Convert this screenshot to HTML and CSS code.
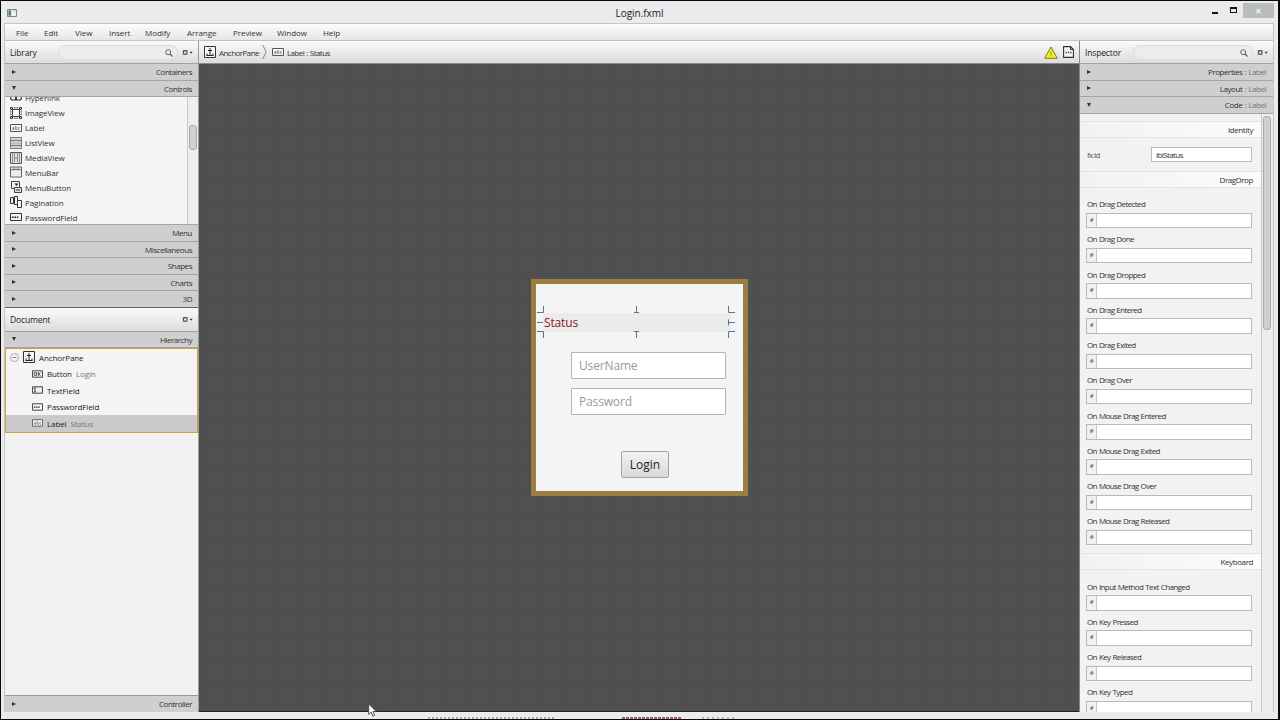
FILE: index.html
```html
<!DOCTYPE html>
<html lang="en">
<head>
  <meta charset="UTF-8">
  <meta name="viewport" content="width=device-width, initial-scale=1.0">
  <title>Login.fxml</title>
  <link rel="stylesheet" href="styles.css">
</head>
<body>
  <!-- Shared icons -->
  <svg class="defs" width="0" height="0">
    <symbol id="i-anchor" viewBox="0 0 12 12"><path d="M.5.5h11v11H.5z" fill="#f6f6f6" stroke="#333"/><path d="M6 2v7.500M4 4.500h4M2.500 9.500h7M3 7.500v2M9 7.500v2" fill="none" stroke="#222"/></symbol>
    <symbol id="i-label" viewBox="0 0 12 8"><path d="M.5.5h11v7H.5z" fill="#f6f6f6" stroke="#555"/><path d="M2.500 3.500h1.500v2H2.500v-1H4M5.500 2v3.500H7v-2H5.500M9.800 3.500H8.500v2h1.300" fill="none" stroke="#777" stroke-width=".7"/></symbol>
    <symbol id="i-button" viewBox="0 0 12 8"><path d="M.5.5h11v7H.5z" fill="#f6f6f6" stroke="#333"/><path d="M2.500 2.500h2.500v3H2.500zM7 2v4M9.500 2L7.300 4l2.200 2" fill="none" stroke="#333" stroke-width=".9"/></symbol>
    <symbol id="i-text" viewBox="0 0 12 8"><path d="M.5.5h11v7H.5z" fill="#eee" stroke="#333"/><path d="M2 2h2.400M2 6h2.400M3.200 2v4" stroke="#333" fill="none" stroke-width=".9"/></symbol>
    <symbol id="i-pass" viewBox="0 0 12 8"><path d="M.5.5h11v7H.5z" fill="#f6f6f6" stroke="#333"/><path d="M2 4.200h1.600M4.400 4.200H6M6.800 4.200h1.600" stroke="#222" stroke-width="1.500"/></symbol>
    <symbol id="i-image" viewBox="0 0 12 12"><path d="M2.500 2.500h7v7h-7z" fill="none" stroke="#444"/><path d="M.5.5h2v2h-2zM9.500.5h2v2h-2zM.5 9.500h2v2h-2zM9.500 9.500h2v2h-2zM4 .8h1.500M6.500.8H8M4 11.200h1.500M6.500 11.200H8M.8 4v1.500M.8 6.500V8M11.200 4v1.500M11.200 6.500V8" fill="#ddd" stroke="#333"/></symbol>
    <symbol id="i-list" viewBox="0 0 12 12"><path d="M.5.5h11v11H.5z" fill="#d4d4d4" stroke="#777"/><path d="M.5 3.500h11M.5 8.500h11" stroke="#777"/><path d="M.5 6h11" stroke="#aaa"/></symbol>
    <symbol id="i-media" viewBox="0 0 12 12"><path d="M.5.5h11v11H.5z" fill="#e2e2e2" stroke="#555"/><path d="M2.500.5v11M9.500.5v11M4.500 1v9M7.500 1v9M4.500 6h3" stroke="#777" fill="none" stroke-width=".8"/></symbol>
    <symbol id="i-menubar" viewBox="0 0 12 11"><path d="M.5.5h11v10H.5z" fill="#eee" stroke="#666"/><path d="M.5 3.200h11M4.200 1v2M8 1v2" stroke="#666"/></symbol>
    <symbol id="i-menubtn" viewBox="0 0 12 12"><path d="M1.500.5h8v7h-8z" fill="#eee" stroke="#444"/><path d="M4.500 6.500h7v5h-7z" fill="#ddd" stroke="#444"/><path d="M4.500 2.500h4l-2 2.500z" fill="#222"/><path d="M6 9h4" stroke="#444"/></symbol>
    <symbol id="i-pages" viewBox="0 0 12 12"><path d="M.5 1.500h3v6h-3z" fill="#eee" stroke="#333"/><path d="M4.500.5h3v8h-3zM7.500 4.500h4v7h-4z" fill="#f4f4f4" stroke="#333"/></symbol>
    <symbol id="i-link" viewBox="0 0 12 8"><rect x=".6" y="2" width="6" height="4" rx="2" fill="none" stroke="#333" stroke-width="1.100"/><rect x="5.400" y="2" width="6" height="4" rx="2" fill="none" stroke="#333" stroke-width="1.100"/></symbol>
    <symbol id="i-search" viewBox="0 0 8 8"><circle cx="3.200" cy="3.200" r="2.500" fill="none" stroke="#555" stroke-width=".9"/><path d="M5 5l2.500 2.500" stroke="#555" stroke-width="1.100"/></symbol>
    <symbol id="i-gear" viewBox="0 0 11 7"><circle cx="3.200" cy="3.500" r="1.900" fill="none" stroke="#444" stroke-width="1.100"/><path d="M1 1.300l.7.7M5.400 1.300l-.7.7M1 5.700l.7-.7M5.400 5.700l-.7-.7" stroke="#444"/><path d="M7.600 2.700h3l-1.500 2z" fill="#333"/></symbol>
  </svg>

  <div class="window">
    <header class="titlebar">
      <svg class="app-icon" viewBox="0 0 11 9"><path d="M.5.5h10v8H.5z" fill="#eef3f1" stroke="#5f7771"/><path d="M1.500 1.500h3v6h-3z" fill="#4d7e72"/><path d="M7 2h2.500" stroke="#9ab"/></svg>
      <h1 class="title">Login.fxml</h1>
      <div class="win-buttons">
        <span class="win-min"></span>
        <span class="win-max"></span>
        <span class="win-close">✕</span>
      </div>
    </header>

    <div class="app">
      <nav class="menubar">
        <span class="m-file">File</span><span class="m-edit">Edit</span><span class="m-view">View</span><span class="m-insert">Insert</span><span class="m-modify">Modify</span><span class="m-arrange">Arrange</span><span class="m-preview">Preview</span><span class="m-window">Window</span><span>Help</span>
      </nav>

      <div class="columns">
        <!-- Library + Document -->
        <aside class="left">
          <div class="panel-head"><span>Library</span><div class="search"><svg><use href="#i-search"/></svg></div><svg class="gear"><use href="#i-gear"/></svg></div>
          <div class="section"><i class="arrow"></i><span>Containers</span></div>
          <div class="section"><i class="arrow open"></i><span>Controls</span></div>
          <div class="library">
            <ul class="lib-list">
              <li><svg class="low"><use href="#i-link"/></svg>Hyperlink</li>
              <li><svg><use href="#i-image"/></svg>ImageView</li>
              <li><svg class="low"><use href="#i-label"/></svg>Label</li>
              <li><svg><use href="#i-list"/></svg>ListView</li>
              <li><svg><use href="#i-media"/></svg>MediaView</li>
              <li><svg><use href="#i-menubar"/></svg>MenuBar</li>
              <li><svg><use href="#i-menubtn"/></svg>MenuButton</li>
              <li><svg><use href="#i-pages"/></svg>Pagination</li>
              <li><svg class="low"><use href="#i-pass"/></svg>PasswordField</li>
            </ul>
            <div class="scroll"><div class="thumb"></div></div>
          </div>
          <div class="section"><i class="arrow"></i><span>Menu</span></div>
          <div class="section"><i class="arrow"></i><span>Miscellaneous</span></div>
          <div class="section"><i class="arrow"></i><span>Shapes</span></div>
          <div class="section"><i class="arrow"></i><span>Charts</span></div>
          <div class="section above-doc"><i class="arrow"></i><span>3D</span></div>
          <div class="panel-head doc-head"><span>Document</span><svg class="gear"><use href="#i-gear"/></svg></div>
          <div class="section"><i class="arrow open"></i><span>Hierarchy</span></div>
          <ul class="tree">
            <li class="root"><svg class="toggle" viewBox="0 0 9 9"><circle cx="4.500" cy="4.500" r="4" fill="none" stroke="#b4a9a0"/><path d="M2.500 4.500h4" stroke="#888"/></svg><svg class="big"><use href="#i-anchor"/></svg>AnchorPane</li>
            <li><svg><use href="#i-button"/></svg>Button <em>Login</em></li>
            <li><svg><use href="#i-text"/></svg>TextField</li>
            <li><svg><use href="#i-pass"/></svg>PasswordField</li>
            <li class="selected"><svg><use href="#i-label"/></svg>Label <em>Status</em></li>
          </ul>
          <div class="blank"></div>
          <div class="section last"><i class="arrow"></i><span>Controller</span></div>
        </aside>

        <!-- Design canvas -->
        <main class="center">
          <div class="crumbs">
            <svg class="big"><use href="#i-anchor"/></svg><span class="crumb">AnchorPane</span>
            <svg class="chevron" viewBox="0 0 5 16"><path d="M.7 1l3.500 7-3.500 7" fill="none" stroke="#888"/></svg>
            <svg class="small"><use href="#i-label"/></svg><span class="crumb">Label : Status</span>
            <svg class="warn" viewBox="0 0 14 13"><path d="M7 1l6.300 11.300H.7z" fill="#f3f31c" stroke="#77782a"/><path d="M7 6v2.500M7 9.300v1" stroke="#77781a"/></svg>
            <svg class="doc" viewBox="0 0 11 12"><path d="M.6.6h6.900l2.900 2.900v7.900H.6z" fill="#f6f6f6" stroke="#333" stroke-width="1.100"/><path d="M7.500.6v2.900h2.900" fill="none" stroke="#333"/><path d="M2.500 6.500h1.500M4.800 6.500h1.500M7.100 6.500h1.500" stroke="#555" stroke-width="1.500"/></svg>
          </div>
          <div class="canvas">
            <div class="pane">
              <div class="status">Status</div>
              <svg class="handles" viewBox="0 0 200 34"><path d="M1 7.500h6.500V1M1 26.500h6.500V33M199 7.500h-6.500V1M199 26.500h-6.500V33M98 7.500h5M100.500 7.500V1M98 26.500h5M100.500 26.500V33M1 17.500h6M193 17.500h6M192.500 14.500v6" fill="none" stroke="#5a7298"/></svg>
              <div class="input user">UserName</div>
              <div class="input password">Password</div>
              <div class="login">Login</div>
            </div>
          </div>
        </main>

        <!-- Inspector -->
        <aside class="right">
          <div class="panel-head"><span>Inspector</span><div class="search"><svg><use href="#i-search"/></svg></div><svg class="gear"><use href="#i-gear"/></svg></div>
          <div class="section"><i class="arrow"></i><span>Properties <em>: Label</em></span></div>
          <div class="section"><i class="arrow"></i><span>Layout <em>: Label</em></span></div>
          <div class="section"><i class="arrow open"></i><span>Code <em>: Label</em></span></div>
          <div class="inspector">
            <div class="fields">
              <div class="band">Identity</div>
              <div class="fxid"><span>fx:id</span><div class="value">lblStatus</div></div>
              <div class="band">DragDrop</div>
              <div class="events">
                <div class="event"><label>On Drag Detected</label><div class="box"><b>#</b></div></div>
                <div class="event"><label>On Drag Done</label><div class="box"><b>#</b></div></div>
                <div class="event"><label>On Drag Dropped</label><div class="box"><b>#</b></div></div>
                <div class="event"><label>On Drag Entered</label><div class="box"><b>#</b></div></div>
                <div class="event"><label>On Drag Exited</label><div class="box"><b>#</b></div></div>
                <div class="event"><label>On Drag Over</label><div class="box"><b>#</b></div></div>
                <div class="event"><label>On Mouse Drag Entered</label><div class="box"><b>#</b></div></div>
                <div class="event"><label>On Mouse Drag Exited</label><div class="box"><b>#</b></div></div>
                <div class="event"><label>On Mouse Drag Over</label><div class="box"><b>#</b></div></div>
                <div class="event"><label>On Mouse Drag Released</label><div class="box"><b>#</b></div></div>
              </div>
              <div class="band keyboard">Keyboard</div>
              <div class="events">
                <div class="event"><label>On Input Method Text Changed</label><div class="box"><b>#</b></div></div>
                <div class="event"><label>On Key Pressed</label><div class="box"><b>#</b></div></div>
                <div class="event"><label>On Key Released</label><div class="box"><b>#</b></div></div>
                <div class="event"><label>On Key Typed</label><div class="box"><b>#</b></div></div>
              </div>
            </div>
            <div class="scroll"><div class="thumb"></div></div>
          </div>
        </aside>
      </div>
    </div>
    <!-- Page showing through below the window edge -->
    <footer class="behind"><i class="b-title"></i><i class="b-red"></i><i class="b-end"></i></footer>
  </div>
  <svg class="cursor" viewBox="0 0 9 14"><path d="M.7.8v10.500l2.500-2.200 1.700 4 1.700-.8-1.700-3.700h3.400z" fill="#fff" stroke="#333" stroke-width=".8"/></svg>
</body>
</html>
```
FILE: styles.css
```css
* {
  box-sizing: border-box;
  margin: 0;
  padding: 0;
}
body {
  width: 1280px;
  height: 720px;
  overflow: hidden;
  background: #0a080c;
  font-family: "Open Sans", "Noto Sans", sans-serif;
  font-size: 8px;
  letter-spacing: -0.6px;
  word-spacing: 0.5px;
  color: #333;
}
ul {
  list-style: none;
}
em {
  font-style: normal;
  color: #777;
}
svg {
  display: block;
  flex: none;
}
.defs {
  display: none;
}

/* Window frame */
.window {
  width: 1277px;
  height: 718px;
  margin: 1px 0 0 1px;
  display: flex;
  flex-direction: column;
  padding: 0 4px 0 3px;
  background: #e9ebec;
}
.titlebar {
  height: 22px;
  display: flex;
  align-items: center;
  justify-content: space-between;
  padding-left: 3px;
}
.app-icon {
  width: 10px;
  height: 8px;
  margin-top: 2px;
}
.title {
  font-size: 10px;
  font-weight: normal;
  letter-spacing: -0.05px;
  color: #222;
  margin: 2px 0 0 50px;
}
.win-buttons {
  display: flex;
  align-self: flex-start;
  align-items: flex-start;
}
.win-min {
  width: 6px;
  height: 2px;
  margin: 11px 12px 0 0;
  background: #111;
}
.win-max {
  width: 7px;
  height: 6px;
  margin: 6px 6px 0 0;
  border: 1px solid #111;
  border-top-width: 2px;
}
.win-close {
  width: 31px;
  height: 15px;
  margin-top: 2px;
  background: #b9bdbd;
  color: #fff;
  font-size: 8px;
  line-height: 15px;
  text-align: center;
}
.app {
  flex: 1;
  min-height: 0;
  display: flex;
  flex-direction: column;
  border: 1px solid #c4c6c6;
  border-bottom: 0;
}
.menubar {
  height: 17px;
  display: flex;
  align-items: center;
  padding: 0 0 0 11px;
  background: linear-gradient(#fdfdfd, #e6e6e6);
  border-bottom: 1px solid #c2c2c2;
  letter-spacing: -0.05px;
}
.m-file { width: 28px; }
.m-edit { width: 31px; }
.m-view { width: 34px; }
.m-insert { width: 36px; }
.m-modify { width: 42px; }
.m-arrange { width: 46px; }
.m-preview { width: 44px; }
.m-window { width: 46px; }
.columns {
  flex: 1;
  min-height: 0;
  display: flex;
}
.left {
  width: 194px;
  display: flex;
  flex-direction: column;
  border-right: 1px solid #9a9a9a;
}
.center {
  flex: 1;
  display: flex;
  flex-direction: column;
}
.right {
  width: 194px;
  display: flex;
  flex-direction: column;
  border-left: 1px solid #888;
}

/* Panel headers and accordion bars */
.panel-head {
  flex: none;
  height: 23px;
  display: flex;
  align-items: center;
  padding: 0 5px;
  background: linear-gradient(#fafafa, #dcdcdc);
  border-bottom: 1px solid #a2a2a2;
  font-size: 8.5px;
  letter-spacing: -0.15px;
  color: #222;
}
.search {
  width: 120px;
  height: 15px;
  margin: 0 4px 0 auto;
  padding: 3px 4px 0 0;
  border: 1px solid #dcdcdc;
  border-radius: 8px;
  background: #ececec;
}
.search svg {
  width: 8px;
  height: 8px;
  margin-left: auto;
}
.gear {
  width: 11px;
  height: 7px;
}
.doc-head {
  height: 24px;
}
.doc-head .gear {
  margin-left: auto;
}
.section {
  flex: none;
  height: 16.5px;
  display: flex;
  align-items: center;
  justify-content: space-between;
  padding: 0 6px 0 7px;
  background: #cfcfcf;
  border-bottom: 1px solid #a4a4a4;
}
.left .section {
  letter-spacing: -0.45px;
}
.right .section {
  padding-right: 7px;
  letter-spacing: -0.45px;
}
.left .above-doc {
  border-bottom-color: #666;
}
.arrow {
  border-left: 4px solid #333;
  border-top: 2px solid transparent;
  border-bottom: 2px solid transparent;
}
.arrow.open {
  border: 2px solid transparent;
  border-top: 4px solid #333;
  border-bottom: 0;
}
.library {
  flex: none;
  height: 128px;
  display: flex;
  background: #f4f4f4;
  border-bottom: 1px solid #a4a4a4;
}
.lib-list {
  flex: 1;
  overflow: hidden;
}
.lib-list li {
  height: 14.9px;
  display: flex;
  align-items: center;
  gap: 3px;
  padding-left: 5px;
  letter-spacing: -0.1px;
}
.lib-list li:first-child {
  margin-top: -6.5px;
}
.lib-list svg {
  width: 12px;
  height: 12px;
}
.lib-list svg.low {
  height: 8px;
}
.scroll {
  width: 11px;
  border-left: 1px solid #c8c8c8;
  background: #eee;
  padding-left: 1px;
}
.thumb {
  width: 8px;
  height: 25px;
  margin-top: 28px;
  border: 1px solid #a9a9a9;
  border-radius: 3px;
  background: #d0d0d0;
}
.tree {
  flex: none;
  height: 85px;
  border: 1px solid #cda23c;
  background: #f4f4f4;
  color: #222;
}
.tree li {
  height: 16.5px;
  display: flex;
  align-items: center;
  gap: 4px;
  padding-left: 26px;
  letter-spacing: -0.1px;
}
.tree li.root {
  padding-left: 4px;
}
.tree li.selected {
  background: #cacaca;
}
.tree svg {
  width: 11px;
  height: 8px;
}
.tree svg.toggle {
  width: 9px;
  height: 9px;
}
.tree svg.big,
.crumbs svg.big {
  width: 12px;
  height: 12px;
}
.blank {
  flex: 1;
  background: #f2f2f2;
  border-bottom: 1px solid #999;
}
.last {
  border-bottom: 0;
}

/* Breadcrumb bar */
.crumbs {
  height: 23px;
  display: flex;
  align-items: center;
  padding: 0 5px;
  background: linear-gradient(#fafafa, #dcdcdc);
  border-bottom: 1px solid #888;
  letter-spacing: -0.55px;
}
.crumb {
  margin-left: 3px;
}
.chevron {
  width: 5px;
  height: 16px;
  margin: 0 5px 0 3px;
}
.small {
  width: 12px;
  height: 8px;
}
.warn {
  width: 14px;
  height: 13px;
  margin: 0 5px 0 auto;
}
.doc {
  width: 11px;
  height: 12px;
}
.canvas {
  flex: 1;
  display: flex;
  align-items: center;
  justify-content: center;
  padding-left: 1px;
  border-bottom: 1px solid #222;
  background-color: #4e4e4e;
  background-image: repeating-linear-gradient(90deg, rgba(255, 255, 255, 0.01) 0 1px, transparent 1px 3px), repeating-linear-gradient(rgba(255, 255, 255, 0.01) 0 1px, transparent 1px 3px);
}

/* The edited form: children are anchored at free positions */
.pane {
  width: 217px;
  height: 217px;
  position: relative;
  border: 5px solid #9c7e40;
  background: #f4f4f4;
  font-size: 12px;
  letter-spacing: -0.15px;
}
.status {
  position: absolute;
  left: 7px;
  top: 29px;
  width: 188px;
  height: 19px;
  padding-left: 1px;
  line-height: 19px;
  background: #ebece9;
  color: #8c1230;
}
.handles {
  position: absolute;
  left: 0;
  top: 21px;
  width: 200px;
  height: 34px;
}
.input {
  position: absolute;
  left: 35px;
  width: 155px;
  height: 27px;
  padding-left: 7px;
  line-height: 26px;
  border: 1px solid #b4b4b4;
  border-radius: 1px;
  background: #fff;
  color: #999;
}
.user {
  top: 68px;
}
.password {
  top: 104px;
}
.login {
  position: absolute;
  left: 85px;
  top: 167px;
  width: 48px;
  height: 27px;
  line-height: 26px;
  text-align: center;
  letter-spacing: 0;
  border: 1px solid #a6a6a6;
  border-radius: 2px;
  background: linear-gradient(#f2f2f2, #d9d9d9);
  color: #222;
}

/* Inspector */
.inspector {
  flex: 1;
  min-height: 0;
  display: flex;
  background: #f2f2f2;
}
.fields {
  flex: 1;
  overflow: hidden;
  padding-top: 7px;
}
.band {
  height: 17px;
  padding-right: 8px;
  line-height: 15px;
  text-align: right;
  letter-spacing: -0.4px;
  border-top: 1px solid #e4e4e4;
  border-bottom: 1px solid #e4e4e4;
  background: linear-gradient(90deg, #f2f2f2, #fcfcfc);
}
.fxid {
  height: 33px;
  display: flex;
  align-items: center;
  justify-content: space-between;
  padding: 0 9px 0 7px;
  color: #555;
}
.value {
  width: 101px;
  height: 15px;
  padding-left: 4px;
  line-height: 14px;
  border: 1px solid #bbb;
  background: #fff;
  color: #333;
}
.events {
  padding: 8.5px 9px 0 7px;
}
.event {
  height: 35.25px;
}
.event label {
  display: block;
  height: 16.5px;
  line-height: 16px;
}
.box {
  height: 15.5px;
  margin-left: -1px;
  border: 1px solid #b9b9b9;
  background: #fff;
}
.box b {
  display: block;
  width: 10px;
  height: 100%;
  line-height: 13px;
  font-size: 6px;
  text-align: center;
  color: #777;
  border-right: 1px solid #c6c6c6;
  background: #f0f0f0;
}
.keyboard {
  margin-top: 4.5px;
}
.inspector .scroll {
  width: 12px;
}
.inspector .thumb {
  height: 214px;
  margin-top: 2px;
}

/* Bottom frame strip */
.behind {
  flex: none;
  height: 7px;
  display: flex;
  align-items: flex-end;
  padding-left: 424px;
}
.behind i {
  height: 2px;
}
.b-title {
  width: 128px;
  background: repeating-linear-gradient(90deg, #a9abac 0 2px, transparent 2px 4px);
}
.b-red {
  width: 60px;
  margin: 0 20px 0 66px;
  background: repeating-linear-gradient(90deg, #a06060 0 3px, transparent 3px 4px);
}
.b-end {
  width: 34px;
  background: repeating-linear-gradient(90deg, #b4b6b7 0 2px, transparent 2px 5px);
}
.cursor {
  position: absolute;
  left: 368px;
  top: 703px;
  width: 9px;
  height: 14px;
}
```
